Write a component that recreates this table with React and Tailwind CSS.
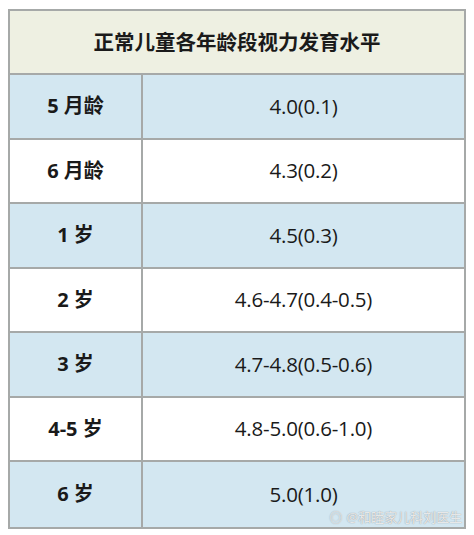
const rows = [
  ["5 月龄", "4.0(0.1)"],
  ["6 月龄", "4.3(0.2)"],
  ["1 岁", "4.5(0.3)"],
  ["2 岁", "4.6-4.7(0.4-0.5)"],
  ["3 岁", "4.7-4.8(0.5-0.6)"],
  ["4-5 岁", "4.8-5.0(0.6-1.0)"],
  ["6 岁", "5.0(1.0)"],
];

export default function App() {
  return (
    <div
      className="relative w-[474px] h-[535px] bg-white pt-[9px] pl-[8px]"
      style={{ fontFamily: '"Open Sans", "Noto Sans CJK SC", sans-serif' }}
    >
      <div className="w-[458px] border-2 border-[#a6a9a8]">
        <div className="h-[64px] bg-[#eef0e2] flex items-center justify-center border-b-2 border-[#a6a9a8] text-[20.5px] font-bold text-[#1a1a1a]">
          正常儿童各年龄段视力发育水平
        </div>
        {rows.map(([age, val], i) => (
          <div
            key={age}
            className={
              "flex h-[64.5px] " +
              (i < rows.length - 1 ? "border-b-2 border-[#a6a9a8] " : "") +
              (i % 2 === 0 ? "bg-[#d3e7f1]" : "bg-white")
            }
          >
            <div className="w-[133px] flex items-center justify-center border-r-2 border-[#a6a9a8] text-[20px] font-bold text-[#1a1a1a]">
              {age}
            </div>
            <div className="flex-1 flex items-center justify-center text-[20.5px] text-[#1a1a1a] tracking-[-0.2px]">
              {val}
            </div>
          </div>
        ))}
      </div>
      <div className="absolute right-[12px] bottom-[8px] flex items-center gap-1 text-[13px] text-white/80 [text-shadow:0_0_1px_#777]">
        <span>◎</span>
        <span>@和睦家儿科刘医生</span>
      </div>
    </div>
  );
}
